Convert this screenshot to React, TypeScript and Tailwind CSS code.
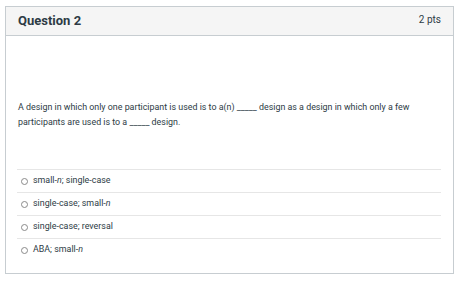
import React from "react";

export default function App() {
  const options = [
    <>small-<i>n</i>; single-case</>,
    <>single-case; small-<i>n</i></>,
    <>single-case; reversal</>,
    <>ABA; small-<i>n</i></>,
  ];

  return (
    <div className="min-h-screen bg-white pt-[6px] pl-[5px] font-['Roboto',sans-serif]">
      {/* Question card */}
      <div className="w-[449px] h-[268px] border border-[#c7cdd1] flex flex-col">
        <div className="h-[29px] shrink-0 bg-[#f5f5f5] border-b border-[#c7cdd1] flex items-center justify-between pl-[12px] pr-[12px]">
          <span className="text-[13px] font-bold text-[#2d3b45]">Question 2</span>
          <span className="text-[10px] text-[#2d3b45] -mt-[3px]">2 pts</span>
        </div>

        <div className="pt-[64px] pl-[12px] pr-[12px]">
          <p className="text-[8.9px] leading-[15px] text-[#2d3b45]">
            A design in which only one participant is used is to a(n) _____ design as a design in which only a few participants are used is to a _____ design.
          </p>
        </div>

        <div className="mt-[39px] ml-[11px] mr-[12px]">
          {options.map((label, i) => (
            <div
              key={i}
              className="h-[23px] border-t border-[#e6e6e6] flex items-center pl-[4px] gap-[5px]"
            >
              <span className="w-[7px] h-[7px] rounded-full border border-[#8a8a8a] bg-white" />
              <span className="text-[8.9px] text-[#2d3b45]">{label}</span>
            </div>
          ))}
        </div>
      </div>
    </div>
  );
}
